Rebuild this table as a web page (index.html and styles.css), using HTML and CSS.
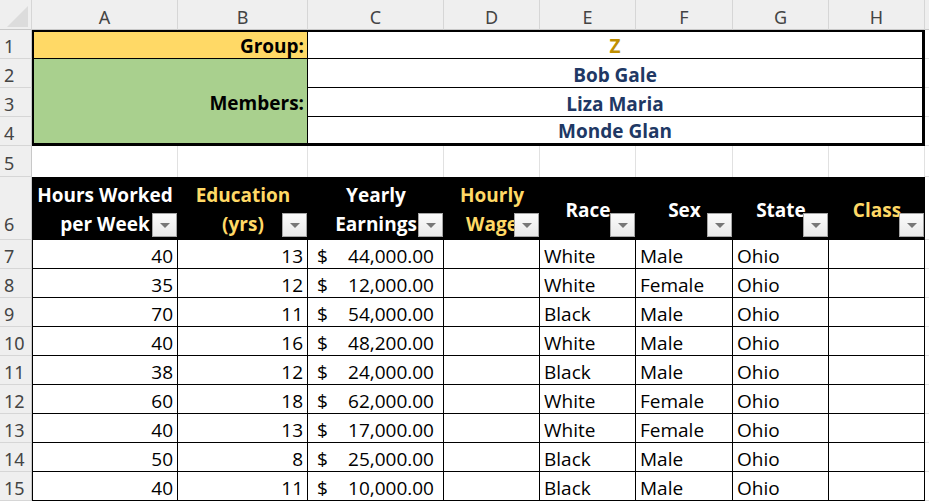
FILE: index.html
```html
<!DOCTYPE html>
<html>
<head>
<meta charset="utf-8">
<link rel="stylesheet" href="styles.css">
</head>
<body>
<div class="sheet">
  <div class="corner"><svg width="32" height="30" viewBox="0 0 32 30"><polygon points="7,27 28,27 28,6" fill="#dcdcdc"/></svg></div>
  <div class="ch">A</div><div class="ch">B</div><div class="ch">C</div><div class="ch">D</div>
  <div class="ch">E</div><div class="ch">F</div><div class="ch">G</div><div class="ch">H</div><div class="ch ch-end"></div>

  <div class="rh">1</div>
  <div class="c group-label span2">Group:</div>
  <div class="c group-val span6">Z</div>
  <div class="c extra"></div>

  <div class="rh">2</div>
  <div class="c members span2">Members:</div>
  <div class="c member span6">Bob Gale</div>
  <div class="c extra"></div>

  <div class="rh">3</div>
  <div class="c member span6">Liza Maria</div>
  <div class="c extra"></div>

  <div class="rh">4</div>
  <div class="c member member-last span6">Monde Glan</div>
  <div class="c extra"></div>

  <div class="rh">5</div>
  <div class="c blank"></div><div class="c blank"></div><div class="c blank"></div><div class="c blank"></div>
  <div class="c blank"></div><div class="c blank"></div><div class="c blank"></div><div class="c blank"></div>
  <div class="c extra"></div>

  <div class="rh rh-tall">6</div>
  <div class="c hd">Hours Worked<br>per Week<span class="fb"><i></i></span></div>
  <div class="c hd yel">Education<br>(yrs)<span class="fb"><i></i></span></div>
  <div class="c hd">Yearly<br>Earnings<span class="fb"><i></i></span></div>
  <div class="c hd yel">Hourly<br>Wage<span class="fb"><i></i></span></div>
  <div class="c hd">Race<span class="fb"><i></i></span></div>
  <div class="c hd">Sex<span class="fb"><i></i></span></div>
  <div class="c hd">State<span class="fb"><i></i></span></div>
  <div class="c hd yel">Class<span class="fb"><i></i></span></div>
  <div class="c extra"></div>

  <div class="rh">7</div>
  <div class="c d num first">40</div><div class="c d num">13</div>
  <div class="c d cur"><span>$</span><span>44,000.00</span></div><div class="c d"></div>
  <div class="c d txt">White</div><div class="c d txt">Male</div><div class="c d txt">Ohio</div><div class="c d"></div>
  <div class="c extra"></div>

  <div class="rh">8</div>
  <div class="c d num first">35</div><div class="c d num">12</div>
  <div class="c d cur"><span>$</span><span>12,000.00</span></div><div class="c d"></div>
  <div class="c d txt">White</div><div class="c d txt">Female</div><div class="c d txt">Ohio</div><div class="c d"></div>
  <div class="c extra"></div>

  <div class="rh">9</div>
  <div class="c d num first">70</div><div class="c d num">11</div>
  <div class="c d cur"><span>$</span><span>54,000.00</span></div><div class="c d"></div>
  <div class="c d txt">Black</div><div class="c d txt">Male</div><div class="c d txt">Ohio</div><div class="c d"></div>
  <div class="c extra"></div>

  <div class="rh">10</div>
  <div class="c d num first">40</div><div class="c d num">16</div>
  <div class="c d cur"><span>$</span><span>48,200.00</span></div><div class="c d"></div>
  <div class="c d txt">White</div><div class="c d txt">Male</div><div class="c d txt">Ohio</div><div class="c d"></div>
  <div class="c extra"></div>

  <div class="rh">11</div>
  <div class="c d num first">38</div><div class="c d num">12</div>
  <div class="c d cur"><span>$</span><span>24,000.00</span></div><div class="c d"></div>
  <div class="c d txt">Black</div><div class="c d txt">Male</div><div class="c d txt">Ohio</div><div class="c d"></div>
  <div class="c extra"></div>

  <div class="rh">12</div>
  <div class="c d num first">60</div><div class="c d num">18</div>
  <div class="c d cur"><span>$</span><span>62,000.00</span></div><div class="c d"></div>
  <div class="c d txt">White</div><div class="c d txt">Female</div><div class="c d txt">Ohio</div><div class="c d"></div>
  <div class="c extra"></div>

  <div class="rh">13</div>
  <div class="c d num first">40</div><div class="c d num">13</div>
  <div class="c d cur"><span>$</span><span>17,000.00</span></div><div class="c d"></div>
  <div class="c d txt">White</div><div class="c d txt">Female</div><div class="c d txt">Ohio</div><div class="c d"></div>
  <div class="c extra"></div>

  <div class="rh">14</div>
  <div class="c d num first">50</div><div class="c d num">8</div>
  <div class="c d cur"><span>$</span><span>25,000.00</span></div><div class="c d"></div>
  <div class="c d txt">Black</div><div class="c d txt">Male</div><div class="c d txt">Ohio</div><div class="c d"></div>
  <div class="c extra"></div>

  <div class="rh">15</div>
  <div class="c d num first">40</div><div class="c d num">11</div>
  <div class="c d cur"><span>$</span><span>10,000.00</span></div><div class="c d"></div>
  <div class="c d txt">Black</div><div class="c d txt">Male</div><div class="c d txt">Ohio</div><div class="c d"></div>
  <div class="c extra"></div>
</div>
</body>
</html>
```

FILE: styles.css
```css
html, body {
  margin: 0;
  padding: 0;
  background: #ffffff;
  overflow: hidden;
}
.sheet {
  display: grid;
  grid-template-columns: 32px 146px 130px 136px 96px 96px 97px 96px 96px 4px;
  grid-template-rows: 30px 29px 29px 29px 29px 31px 63px repeat(9, 29px);
  font-family: "Open Sans", "Liberation Sans", sans-serif;
  font-size: 19px;
  color: #000;
}
.sheet > div {
  box-sizing: border-box;
  min-width: 0;
}
.corner {
  background: #efefef;
  border-right: 1px solid #d6d6d6;
  border-bottom: 1px solid #c8c8c8;
}
.corner svg { display: block; }
.ch {
  background: #efefef;
  border-right: 1px solid #d6d6d6;
  border-bottom: 1px solid #c8c8c8;
  font-family: "Noto Sans", "Open Sans", sans-serif;
  font-size: 18px;
  color: #444;
  display: flex;
  align-items: center;
  justify-content: center;
  padding-top: 4px;
}
.ch-end { border-right: none; }
.rh {
  background: #efefef;
  border-right: 1px solid #c8c8c8;
  border-bottom: 1px solid #d6d6d6;
  font-family: "Noto Sans", "Open Sans", sans-serif;
  font-size: 18px;
  color: #444;
  display: flex;
  align-items: center;
  padding-left: 4px;
  padding-top: 4px;
}
.rh-tall { align-items: flex-end; padding-bottom: 3px; }
.c {
  display: flex;
  align-items: flex-end;
  line-height: 24px;
  border-right: 1px solid #e1e1e1;
  border-bottom: 1px solid #e1e1e1;
  white-space: nowrap;
}
.span2 { grid-column: span 2; }
.span6 { grid-column: span 6; }
.group-label {
  background: #ffd966;
  font-weight: 700;
  justify-content: flex-end;
  padding-right: 3px;
  border-top: 2px solid #000;
  border-left: 2px solid #000;
  border-right: 1px solid #000;
  border-bottom: 1px solid #000;
}
.group-val {
  color: #bf8f00;
  font-weight: 700;
  justify-content: center;
  border-top: 2px solid #000;
  border-right: 3px solid #000;
  border-bottom: 1px solid #000;
}
.members {
  grid-row: span 3;
  background: #a9d08e;
  font-weight: 700;
  justify-content: flex-end;
  align-items: center;
  padding-right: 3px;
  padding-top: 3px;
  border-left: 2px solid #000;
  border-right: 1px solid #000;
  border-bottom: 3px solid #000;
}
.member {
  color: #203864;
  font-weight: 700;
  justify-content: center;
  border-right: 3px solid #000;
  border-bottom: 1px solid #000;
}
.member-last {
  border-bottom: 3px solid #000;
  line-height: 23px;
}
.extra { border-right: none; }
.blank { border-bottom: none; }
.hd {
  position: relative;
  background: #000;
  border: none;
  color: #ffffff;
  font-weight: 700;
  align-items: center;
  justify-content: center;
  text-align: center;
  line-height: 29px;
  padding-top: 3px;
}
.yel { color: #ffd966; }
.fb {
  position: absolute;
  right: 1px;
  bottom: 3px;
  width: 25px;
  height: 24px;
  box-sizing: border-box;
  border: 1px solid #a6a6a6;
  background: linear-gradient(#fbfbfb, #e9e9e9);
  display: flex;
  align-items: center;
  justify-content: center;
}
.fb i {
  display: block;
  width: 0;
  height: 0;
  border-left: 5px solid transparent;
  border-right: 5px solid transparent;
  border-top: 5px solid #777;
  margin-top: 1px;
}
.d {
  border-right: 1px solid #000;
  border-bottom: 1px solid #000;
}
.first { border-left: 1px solid #000; }
.num {
  justify-content: flex-end;
  padding-right: 4px;
}
.txt {
  padding-left: 4px;
}
.cur {
  justify-content: space-between;
  padding-left: 9px;
  padding-right: 9px;
}
```
